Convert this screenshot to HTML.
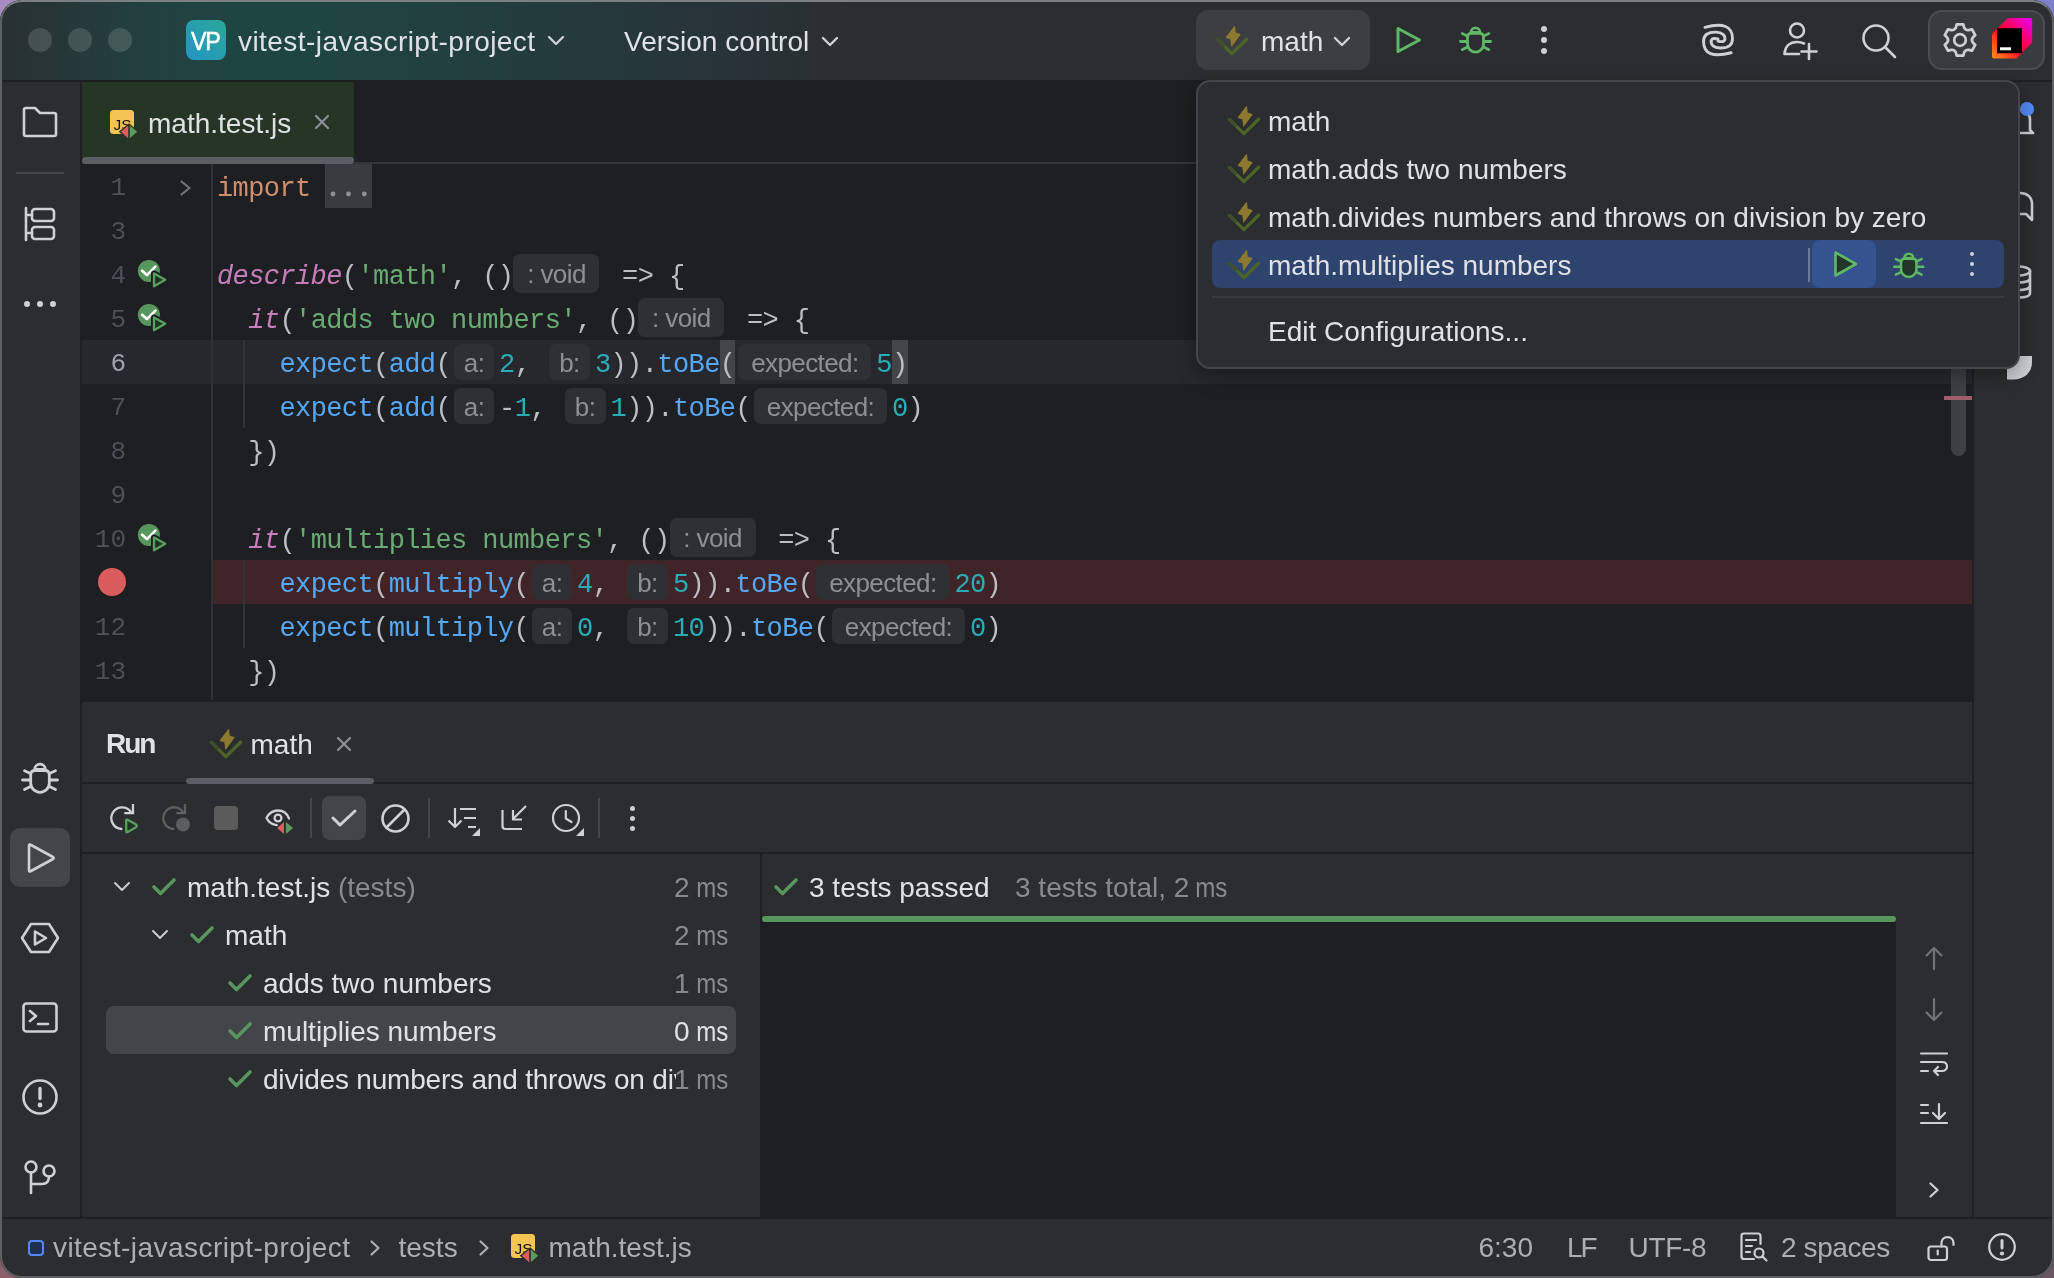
<!DOCTYPE html><html><head><meta charset="utf-8"><style>
*{box-sizing:border-box;margin:0;padding:0}
html,body{width:2054px;height:1278px;overflow:hidden}
body{position:relative;background:linear-gradient(90deg,#a68cc0,#7c80cc) top/100% 50% no-repeat,linear-gradient(90deg,#8c6068,#6a5563) bottom/100% 50% no-repeat;font-family:"Liberation Sans",sans-serif;color:#DFE1E5}
.a{position:absolute}
.win{position:absolute;left:0;top:0;width:2054px;height:1278px;border-radius:22px;overflow:hidden;background:#2B2D30;will-change:transform}
.frame{position:absolute;left:0;top:0;width:2054px;height:1278px;border-radius:22px;border:2px solid #5E6164;border-top-color:#7B7F82;pointer-events:none}
.ui{position:absolute;font-size:28px;white-space:nowrap;line-height:28px;color:#DFE1E5}
svg{position:absolute;overflow:visible}
.ic{fill:none;stroke:#CED0D6;stroke-width:2.6;stroke-linecap:round;stroke-linejoin:round}
.code{position:absolute;left:217px;height:44px;font-family:"Liberation Mono",monospace;font-size:27px;letter-spacing:-0.6px;line-height:44px;white-space:pre;color:#BCBEC4}
.ln{position:absolute;left:80px;width:46px;text-align:right;font-family:"Liberation Mono",monospace;font-size:26px;line-height:44px;color:#4B5059}
.kw{color:#CF8E6D}.fn{color:#56A8F5}.st{color:#6AAB73}.nu{color:#2AACB8}.tf{color:#C77DBB;font-style:italic}
.ih{display:inline-block;position:relative;top:-3px;vertical-align:top;height:36px;margin-top:4px;border-radius:7px;background:#2E3034;color:#8C8F96;font-family:"Liberation Sans",sans-serif;font-size:26px;line-height:33px;padding-top:2.5px;padding-bottom:0.5px;text-align:center;margin-left:3px;margin-right:3px}
.tv{height:39px;margin-top:2px;line-height:37px;padding-top:2px;padding-bottom:0}
</style></head><body><div class="win"><div class="a" style="left:0px;top:0px;width:2054px;height:80px;background:linear-gradient(90deg,#2A3032 0px,#233E3D 120px,#1F4543 230px,#1F4543 320px,#233D3C 520px,#27353A 680px,#2B2D30 880px);"></div><div class="a" style="left:0px;top:80px;width:2054px;height:2px;background:#1E1F22;"></div><div class="a" style="left:28px;top:28px;width:24px;height:24px;border-radius:12px;background:rgba(255,255,255,0.14)"></div><div class="a" style="left:68px;top:28px;width:24px;height:24px;border-radius:12px;background:rgba(255,255,255,0.14)"></div><div class="a" style="left:108px;top:28px;width:24px;height:24px;border-radius:12px;background:rgba(255,255,255,0.14)"></div><div class="a" style="left:186px;top:20px;width:40px;height:40px;background:linear-gradient(225deg,#2aa897 0%,#2494c6 100%);border-radius:8px"></div><div class="ui" style="left:191px;top:28.4px;font-size:26.5px;line-height:26.5px;color:#ffffff;letter-spacing:-1.5px;transform:scaleX(0.88);transform-origin:0 50%;-webkit-text-stroke:0.5px #fff">VP</div><div class="ui" style="left:238px;top:28.1px;font-size:28px;line-height:28px;color:#DFE1E5;letter-spacing:0.45px">vitest-javascript-project</div><svg style="left:548px;top:36px" width="16" height="9" viewBox="0 0 16 9"><path d="M1 1 L8.0 8 L15 1" fill="none" stroke="#CED0D6" stroke-width="2.4" stroke-linecap="round" stroke-linejoin="round"/></svg><div class="ui" style="left:624px;top:28.1px;font-size:28px;line-height:28px;color:#DFE1E5;">Version control</div><svg style="left:822px;top:37px" width="16" height="9" viewBox="0 0 16 9"><path d="M1 1 L8.0 8 L15 1" fill="none" stroke="#CED0D6" stroke-width="2.4" stroke-linecap="round" stroke-linejoin="round"/></svg><div class="a" style="left:1196px;top:10px;width:174px;height:60px;background:#3C3E42;border-radius:12px"></div><svg style="left:1216px;top:26px" width="34" height="32" viewBox="0 0 34 32"><g transform="scale(1.0)">
<path d="M1.4 13.4 L15.9 27.6 L30.6 13.2" fill="none" stroke="#4D6428" stroke-width="3.3" stroke-linecap="round" stroke-linejoin="round"/>
<path d="M1.4 13.4 L7.5 19.4" fill="none" stroke="#3F4F2A" stroke-width="3.3" stroke-linecap="round"/>
<path d="M18.6 0.4 L10 11.6 L14.8 12.9 L15.6 20.2 L24.2 8.5 L19.2 6.9 Z" fill="#8E7A2E" stroke="#8E7A2E" stroke-width="1" stroke-linejoin="round"/>
</g></svg><div class="ui" style="left:1261px;top:28.1px;font-size:28px;line-height:28px;color:#DFE1E5;">math</div><svg style="left:1334px;top:37px" width="16" height="9" viewBox="0 0 16 9"><path d="M1 1 L8.0 8 L15 1" fill="none" stroke="#CED0D6" stroke-width="2.4" stroke-linecap="round" stroke-linejoin="round"/></svg><svg style="left:1396px;top:26px" width="26" height="28" viewBox="0 0 26 28"><path d="M2 2.5 L23.5 14 L2 25.5 Z" fill="none" stroke="#5FB865" stroke-width="3" stroke-linejoin="round"/></svg><svg style="left:1454px;top:19.8px" width="50" height="45" viewBox="0 0 50 45"><g transform="scale(0.86)" fill="none" stroke="#5FB865" stroke-width="3.2" stroke-linecap="round" stroke-linejoin="round">
<path d="M19.7 14.5 A5.3 5.3 0 0 1 30.3 14.5 Z" fill="none"/>
<path d="M15.7 20 Q15.7 15.5 20 15.5 L30 15.5 Q34.3 15.5 34.3 20 L34.3 28 A9.3 9.3 0 0 1 15.7 28 Z" fill="none"/>
<path d="M7.5 25 L15.2 25 M34.8 25 L42.5 25 M9.5 15.8 L15.5 18.6 M40.5 15.8 L34.5 18.6 M9.5 34.5 L15.5 31.5 M40.5 34.5 L34.5 31.5"/></g></svg><div class="a" style="left:1541px;top:26px;width:6px;height:6px;border-radius:3px;background:#CED0D6"></div><div class="a" style="left:1541px;top:37px;width:6px;height:6px;border-radius:3px;background:#CED0D6"></div><div class="a" style="left:1541px;top:48px;width:6px;height:6px;border-radius:3px;background:#CED0D6"></div><svg style="left:1696px;top:18px" width="44" height="44" viewBox="0 0 44 44"><g class="ic" style="stroke-width:2.9"><path d="M8.95 9.29 Q36.49 2.07 36.49 20.65 Q36.49 30.29 24.10 29.95 Q14.46 29.26 15.15 22.72 Q16.18 19.28 22.03 21.0"/><path d="M35.11 34.77 Q7.57 42.0 7.57 23.41 Q7.57 13.77 19.97 14.11 Q29.60 14.80 28.92 21.34 Q27.88 24.78 22.03 23.06"/></g></svg><svg style="left:1783px;top:22px" width="36" height="38" viewBox="0 0 36 38"><g class="ic"><circle cx="14" cy="8.5" r="7"/><path d="M1.5 32 C2 24 7 20 14 20 C17 20 19 20.5 21 21.5 M1.5 32 L16 32 M26 22 L26 37 M18.5 29.5 L33.5 29.5"/></g></svg><svg style="left:1862px;top:24px" width="36" height="36" viewBox="0 0 36 36"><g class="ic"><circle cx="14" cy="14" r="12.5"/><path d="M23.5 23.5 L33 33"/></g></svg><div class="a" style="left:1928px;top:10px;width:117px;height:60px;background:#393B3F;border-radius:14px;border:2px solid #4A4C50"></div><svg style="left:1943px;top:22px" width="34" height="36" viewBox="0 0 34 36"><g class="ic" style="stroke:#CED0D6;stroke-width:2.7"><path d="M13.67 2.35 L20.33 2.35 Q21.30 10.55 28.89 7.29 L32.22 13.06 Q25.60 18.00 32.22 22.94 L28.89 28.71 Q21.30 25.45 20.33 33.65 L13.67 33.65 Q12.70 25.45 5.11 28.71 L1.78 22.94 Q8.40 18.00 1.78 13.06 L5.11 7.29 Q12.70 10.55 13.67 2.35 Z"/><circle cx="17" cy="18" r="5.8"/></g></svg><svg style="left:1992px;top:17.8px" width="41" height="41" viewBox="0 0 41 41"><defs><linearGradient id="jbg" x1="0" y1="41" x2="41" y2="0" gradientUnits="userSpaceOnUse"><stop offset="0" stop-color="#FF9419"/><stop offset="0.45" stop-color="#FF021D"/><stop offset="1" stop-color="#E600FF"/></linearGradient></defs>
<path d="M17 0 L38 0 Q40.2 0 40.2 2.2 L40.2 24.5 L24.5 40.4 L2.2 40.4 Q0 40.4 0 38.2 L0 17.5 Q0 16 1.2 14.8 L14.6 1.2 Q15.8 0 17 0 Z" fill="url(#jbg)"/>
<rect x="5" y="10.2" width="25" height="25" fill="#000"/><rect x="8" y="29.3" width="11" height="3" fill="#fff"/></svg><div class="a" style="left:80px;top:82px;width:2px;height:1136px;background:#1E1F22;"></div><svg style="left:22px;top:106px" width="36" height="32" viewBox="0 0 36 32"><path class="ic" d="M2 4 Q2 2 4 2 L13 2 L18 7 L32 7 Q34 7 34 9 L34 28 Q34 30 32 30 L4 30 Q2 30 2 28 Z"/></svg><div class="a" style="left:16px;top:172px;width:48px;height:2px;background:#43454A;"></div><svg style="left:24px;top:206px" width="32" height="36" viewBox="0 0 32 36"><g class="ic"><path d="M2 2 L2 34 M2 9 L8 9 M2 27 L8 27"/><rect x="8" y="3" width="22" height="12" rx="3"/><rect x="8" y="21" width="22" height="12" rx="3"/></g></svg><div class="a" style="left:24px;top:301px;width:6px;height:6px;border-radius:3px;background:#CED0D6"></div><div class="a" style="left:37px;top:301px;width:6px;height:6px;border-radius:3px;background:#CED0D6"></div><div class="a" style="left:50px;top:301px;width:6px;height:6px;border-radius:3px;background:#CED0D6"></div><svg style="left:15px;top:755px" width="50" height="45" viewBox="0 0 50 45"><g transform="scale(1.0)" fill="none" stroke="#CED0D6" stroke-width="2.8" stroke-linecap="round" stroke-linejoin="round">
<path d="M19.7 14.5 A5.3 5.3 0 0 1 30.3 14.5 Z" fill="none"/>
<path d="M15.7 20 Q15.7 15.5 20 15.5 L30 15.5 Q34.3 15.5 34.3 20 L34.3 28 A9.3 9.3 0 0 1 15.7 28 Z" fill="none"/>
<path d="M7.5 25 L15.2 25 M34.8 25 L42.5 25 M9.5 15.8 L15.5 18.6 M40.5 15.8 L34.5 18.6 M9.5 34.5 L15.5 31.5 M40.5 34.5 L34.5 31.5"/></g></svg><div class="a" style="left:10px;top:828px;width:60px;height:59px;background:#43454A;border-radius:10px"></div><svg style="left:26px;top:843px" width="30" height="30" viewBox="0 0 30 30"><path class="ic" d="M3 2.5 Q3 1 5 2 L27 14 Q28.5 15 27 16 L5 28 Q3 29 3 27.5 Z"/></svg><svg style="left:21px;top:922px" width="38" height="32" viewBox="0 0 38 32"><g class="ic"><path d="M10 2 L28 2 L37 16 L28 30 L10 30 L1 16 Z"/><path d="M14 9.5 L25 16 L14 22.5 Z"/></g></svg><svg style="left:22px;top:1002px" width="36" height="31" viewBox="0 0 36 31"><g class="ic"><rect x="1.5" y="1.5" width="33" height="28" rx="3"/><path d="M8 9 L14 14 L8 19 M16 22 L26 22"/></g></svg><svg style="left:22px;top:1079px" width="36" height="36" viewBox="0 0 36 36"><g class="ic"><circle cx="18" cy="18" r="16.5"/><path d="M18 9.5 L18 19.5" style="stroke-width:3.4"/></g><circle cx="18" cy="26" r="2.4" fill="#CED0D6"/></svg><svg style="left:24px;top:1160px" width="34" height="34" viewBox="0 0 34 34"><g class="ic"><circle cx="7" cy="7" r="5.5"/><circle cx="25" cy="11" r="5.5"/><path d="M7 12.5 L7 33 M25 16.5 Q25 24 18 24 L7 24"/></g></svg><div class="a" style="left:82px;top:82px;width:1890px;height:80px;background:#1E1F22;"></div><div class="a" style="left:82px;top:82px;width:272px;height:76px;background:#273527;"></div><div class="a" style="left:82px;top:156.5px;width:272px;height:7.5px;background:#5B5E65;border-radius:4px"></div><div class="a" style="left:354px;top:162px;width:1618px;height:2px;background:#34363A;"></div><svg style="left:110px;top:110px" width="30" height="30" viewBox="0 0 30 30"><rect x="0" y="0" width="24" height="24" rx="3.5" fill="#F4C553"/>
<text x="3.6" y="19.8" font-family="Liberation Sans" font-size="15.5" fill="#0E0F12">JS</text>
<path d="M19 13.2 L29.3 21.8 L19 30.4 L8.7 21.8 Z" fill="#273527"/>
<path d="M18.2 15.4 L10.8 21.8 L18.2 28.2 Z" fill="#E05B5F"/><path d="M19.8 15.4 L27.2 21.8 L19.8 28.2 Z" fill="#599C5E"/></svg><div class="ui" style="left:148px;top:110.1px;font-size:28px;line-height:28px;color:#DFE1E5;">math.test.js</div><svg style="left:315px;top:115px" width="14" height="14" viewBox="0 0 14 14"><path d="M1 1 L13 13 M13 1 L1 13" stroke="#8C8F96" stroke-width="2.2" stroke-linecap="round"/></svg><div class="a" style="left:82px;top:164px;width:1890px;height:536px;background:#1E1F22;"></div><div class="a" style="left:82px;top:340px;width:1890px;height:44px;background:#26282E;"></div><div class="a" style="left:211px;top:560px;width:1761px;height:44px;background:#3F2528;"></div><div class="a" style="left:211px;top:164px;width:2px;height:536px;background:#2F3135;"></div><div class="a" style="left:243px;top:340px;width:2px;height:88px;background:#313338;"></div><div class="a" style="left:243px;top:560px;width:2px;height:88px;background:#313338;"></div><div class="a" style="left:1951px;top:300px;width:15px;height:156px;background:#3E4044;border-radius:8px"></div><div class="a" style="left:1944px;top:396px;width:28px;height:4px;background:#A05E6A;"></div><div class="ln" style="top:166px;color:#4B5059">1</div><div class="ln" style="top:210px;color:#4B5059">3</div><div class="ln" style="top:254px;color:#4B5059">4</div><div class="ln" style="top:298px;color:#4B5059">5</div><div class="ln" style="top:342px;color:#A1A3AB">6</div><div class="ln" style="top:386px;color:#4B5059">7</div><div class="ln" style="top:430px;color:#4B5059">8</div><div class="ln" style="top:474px;color:#4B5059">9</div><div class="ln" style="top:518px;color:#4B5059">10</div><div class="ln" style="top:606px;color:#4B5059">12</div><div class="ln" style="top:650px;color:#4B5059">13</div><div class="a" style="left:98px;top:568px;width:28px;height:28px;border-radius:14px;background:#DB5C5C"></div><svg style="left:180px;top:180px" width="11" height="16" viewBox="0 0 11 16"><path d="M1.5 1.5 L9.5 8 L1.5 14.5" fill="none" stroke="#6F737A" stroke-width="2.2" stroke-linecap="round" stroke-linejoin="round"/></svg><svg style="left:130px;top:255px" width="40" height="40" viewBox="0 0 40 40"><circle cx="18.9" cy="15.9" r="11" fill="#57965C"/>
<path d="M12.1 15.8 L16.9 20.1 L25.4 11.6" fill="none" stroke="#fff" stroke-width="2.7" stroke-linecap="round" stroke-linejoin="round"/>
<path d="M24 18.4 L35.2 24.8 L24 31.2 Z" fill="#1E1F22" stroke="#1E1F22" stroke-width="6" stroke-linejoin="round"/>
<path d="M24 18.4 L35.2 24.8 L24 31.2 Z" fill="#1F3322" stroke="#5AA05E" stroke-width="2.3" stroke-linejoin="round"/></svg><svg style="left:130px;top:299px" width="40" height="40" viewBox="0 0 40 40"><circle cx="18.9" cy="15.9" r="11" fill="#57965C"/>
<path d="M12.1 15.8 L16.9 20.1 L25.4 11.6" fill="none" stroke="#fff" stroke-width="2.7" stroke-linecap="round" stroke-linejoin="round"/>
<path d="M24 18.4 L35.2 24.8 L24 31.2 Z" fill="#1E1F22" stroke="#1E1F22" stroke-width="6" stroke-linejoin="round"/>
<path d="M24 18.4 L35.2 24.8 L24 31.2 Z" fill="#1F3322" stroke="#5AA05E" stroke-width="2.3" stroke-linejoin="round"/></svg><svg style="left:130px;top:519px" width="40" height="40" viewBox="0 0 40 40"><circle cx="18.9" cy="15.9" r="11" fill="#57965C"/>
<path d="M12.1 15.8 L16.9 20.1 L25.4 11.6" fill="none" stroke="#fff" stroke-width="2.7" stroke-linecap="round" stroke-linejoin="round"/>
<path d="M24 18.4 L35.2 24.8 L24 31.2 Z" fill="#1E1F22" stroke="#1E1F22" stroke-width="6" stroke-linejoin="round"/>
<path d="M24 18.4 L35.2 24.8 L24 31.2 Z" fill="#1F3322" stroke="#5AA05E" stroke-width="2.3" stroke-linejoin="round"/></svg><div class="code" style="top:164px"><span style="position:relative;top:3px"><span class="kw">import</span> </span></div><div class="code" style="top:252px"><span style="position:relative;top:3px"><span class="tf">describe</span>(<span class="st">'math'</span>, ()<span class="ih tv" style="width:86px;margin-left:0px;margin-right:7px">: void</span> => {</span></div><div class="code" style="top:296px"><span style="position:relative;top:3px">  <span class="tf">it</span>(<span class="st">'adds two numbers'</span>, ()<span class="ih tv" style="width:86px;margin-left:0px;margin-right:7px">: void</span> => {</span></div><div class="code" style="top:340px"><span style="position:relative;top:3px">    <span class="fn">expect</span>(<span class="fn">add</span>(<span class="ih" style="width:40px;margin-left:3px;margin-right:5px">a:</span><span class="nu">2</span>, <span class="ih" style="width:41px;margin-left:3px;margin-right:5px">b:</span><span class="nu">3</span>)).<span class="fn">toBe</span><span style="background:#43454A;display:inline-block;vertical-align:top;height:44px;position:relative;top:-3px;padding-top:3px;line-height:44px">(</span><span class="ih" style="width:133px;margin-left:3px;margin-right:5px">expected:</span><span class="nu">5</span><span style="background:#43454A;display:inline-block;vertical-align:top;height:44px;position:relative;top:-3px;padding-top:3px;line-height:44px">)</span></span></div><div class="code" style="top:384px"><span style="position:relative;top:3px">    <span class="fn">expect</span>(<span class="fn">add</span>(<span class="ih" style="width:40px;margin-left:3px;margin-right:5px">a:</span>-<span class="nu">1</span>, <span class="ih" style="width:41px;margin-left:3px;margin-right:5px">b:</span><span class="nu">1</span>)).<span class="fn">toBe</span>(<span class="ih" style="width:133px;margin-left:3px;margin-right:5px">expected:</span><span class="nu">0</span>)</span></div><div class="code" style="top:428px"><span style="position:relative;top:3px">  })</span></div><div class="code" style="top:516px"><span style="position:relative;top:3px">  <span class="tf">it</span>(<span class="st">'multiplies numbers'</span>, ()<span class="ih tv" style="width:86px;margin-left:0px;margin-right:7px">: void</span> => {</span></div><div class="code" style="top:560px"><span style="position:relative;top:3px">    <span class="fn">expect</span>(<span class="fn">multiply</span>(<span class="ih" style="width:40px;margin-left:3px;margin-right:5px">a:</span><span class="nu">4</span>, <span class="ih" style="width:41px;margin-left:3px;margin-right:5px">b:</span><span class="nu">5</span>)).<span class="fn">toBe</span>(<span class="ih" style="width:133px;margin-left:3px;margin-right:5px">expected:</span><span class="nu">20</span>)</span></div><div class="code" style="top:604px"><span style="position:relative;top:3px">    <span class="fn">expect</span>(<span class="fn">multiply</span>(<span class="ih" style="width:40px;margin-left:3px;margin-right:5px">a:</span><span class="nu">0</span>, <span class="ih" style="width:41px;margin-left:3px;margin-right:5px">b:</span><span class="nu">10</span>)).<span class="fn">toBe</span>(<span class="ih" style="width:133px;margin-left:3px;margin-right:5px">expected:</span><span class="nu">0</span>)</span></div><div class="code" style="top:648px"><span style="position:relative;top:3px">  })</span></div><div class="a" style="left:325px;top:164px;width:47px;height:44px;background:#393B40;"></div><svg style="left:325px;top:164px" width="47" height="44" viewBox="0 0 47 44"><g fill="#8F9298"><circle cx="8" cy="30" r="2.4"/><circle cx="23.5" cy="30" r="2.4"/><circle cx="39.3" cy="30" r="2.4"/></g></svg><div class="a" style="left:82px;top:700px;width:1890px;height:2px;background:#1E1F22;"></div><div class="ui" style="left:106px;top:729.6px;font-size:28px;line-height:28px;color:#DFE1E5;font-weight:bold;letter-spacing:-2px">Run</div><svg style="left:210px;top:729px" width="34" height="32" viewBox="0 0 34 32"><g transform="scale(1.0)">
<path d="M1.4 13.4 L15.9 27.6 L30.6 13.2" fill="none" stroke="#4D6428" stroke-width="3.3" stroke-linecap="round" stroke-linejoin="round"/>
<path d="M1.4 13.4 L7.5 19.4" fill="none" stroke="#3F4F2A" stroke-width="3.3" stroke-linecap="round"/>
<path d="M18.6 0.4 L10 11.6 L14.8 12.9 L15.6 20.2 L24.2 8.5 L19.2 6.9 Z" fill="#8E7A2E" stroke="#8E7A2E" stroke-width="1" stroke-linejoin="round"/>
</g></svg><div class="ui" style="left:250.5px;top:730.7px;font-size:28px;line-height:28px;color:#DFE1E5;">math</div><svg style="left:337px;top:737px" width="14" height="14" viewBox="0 0 14 14"><path d="M1 1 L13 13 M13 1 L1 13" stroke="#8C8F96" stroke-width="2.2" stroke-linecap="round"/></svg><div class="a" style="left:82px;top:782px;width:1890px;height:2px;background:#1E1F22;"></div><div class="a" style="left:186px;top:778px;width:188px;height:6px;background:#5B5E65;border-radius:3px"></div><svg style="left:104px;top:798px" width="40" height="40" viewBox="0 0 40 40"><g class="ic" style="stroke-width:2.3"><path d="M17.4 31 A10.8 10.8 0 1 1 26.8 13.8"/><path d="M29 6 L29 15.2 L20.3 15.2" style="stroke-linecap:butt;stroke-linejoin:miter"/></g>
<path d="M22.2 22.6 Q22.2 21 23.6 21.8 L32 26.6 Q33.4 27.9 32 29.2 L23.6 34 Q22.2 34.8 22.2 33.2 Z" fill="#1F3322" stroke="#5AA05E" stroke-width="2.3" stroke-linejoin="round"/></svg><svg style="left:156px;top:798px" width="40" height="40" viewBox="0 0 40 40"><g class="ic" style="stroke:#5E5F61;stroke-width:2.3"><path d="M17.4 31 A10.8 10.8 0 1 1 26.8 13.8"/><path d="M29 6 L29 15.2 L20.3 15.2" style="stroke-linecap:butt;stroke-linejoin:miter"/></g>
<circle cx="27" cy="26.5" r="7" fill="#5C5D5F"/></svg><div class="a" style="left:214px;top:806px;width:24px;height:24px;background:#5B5B5C;border-radius:4px"></div><svg style="left:258px;top:798px" width="40" height="40" viewBox="0 0 40 40"><g class="ic" style="stroke-width:2.3"><path d="M18.8 27.2 C13 26.5 10 23 8.5 20 C11 15 15 12.5 20 12.5 C25 12.5 29 15 31 20.5"/><circle cx="20" cy="20" r="3.4"/></g>
<path d="M19.1 30 L26 24.1 L26 36 Z" fill="#E05B5F"/><path d="M27.9 24.1 L35 30 L27.9 36 Z" fill="#599C5E"/></svg><div class="a" style="left:310px;top:798px;width:2px;height:40px;background:#43454A;"></div><div class="a" style="left:322px;top:796px;width:44px;height:44px;background:#43454A;border-radius:8px"></div><svg style="left:331px;top:809px" width="26" height="18" viewBox="0 0 26 18"><path class="ic" style="stroke-width:3" d="M2 9 L9 16 L24 2"/></svg><svg style="left:381px;top:804px" width="30" height="30" viewBox="0 0 30 30"><g class="ic"><circle cx="14.5" cy="14.5" r="13"/><path d="M5.5 23.5 L23.5 5.5"/></g></svg><div class="a" style="left:428px;top:798px;width:2px;height:40px;background:#43454A;"></div><svg style="left:440px;top:795px" width="160" height="50" viewBox="0 0 160 50"><g class="ic" style="stroke-width:2.2;stroke-linecap:butt"><path d="M15 13 L15 32 M8.5 25.5 L15 32 L21.5 25.5 M20 14 L36 14 M24 23 L36 23 M28 32 L36 32"/>
<path d="M62.5 15 L62.5 31 Q62.5 34 65.5 34 L82 34 M86 11 L73 24 M73 15 L73 24.5 L82 24.5"/>
<circle cx="126" cy="23" r="13"/><path d="M125.8 16 L125.8 23.5 L131.5 27" style="stroke-linecap:round"/></g>
<path d="M40 33 L40 41 L32 41 Z M144 33 L144 41 L136 41 Z" fill="#CED0D6"/></svg><div class="a" style="left:598px;top:798px;width:2px;height:40px;background:#43454A;"></div><div class="a" style="left:629.5px;top:805.5px;width:5px;height:5px;border-radius:3px;background:#CED0D6"></div><div class="a" style="left:629.5px;top:815.5px;width:5px;height:5px;border-radius:3px;background:#CED0D6"></div><div class="a" style="left:629.5px;top:825.5px;width:5px;height:5px;border-radius:3px;background:#CED0D6"></div><div class="a" style="left:82px;top:852px;width:1890px;height:2px;background:#1E1F22;"></div><div class="a" style="left:760px;top:854px;width:2px;height:364px;background:#1E1F22;"></div><svg style="left:114px;top:882px" width="16" height="9" viewBox="0 0 16 9"><path d="M1 1 L8.0 8 L15 1" fill="none" stroke="#C9CBD0" stroke-width="2.0" stroke-linecap="round" stroke-linejoin="round"/></svg><svg style="left:152px;top:878px" width="24" height="18" viewBox="0 0 24 18"><path d="M2 9 L8.5 15.5 L22 2" fill="none" stroke="#57965C" stroke-width="3.6" stroke-linecap="round" stroke-linejoin="round"/></svg><div class="ui" style="left:187px;top:874.1px;font-size:28px;line-height:28px;color:#DFE1E5;">math.test.js <span style="color:#868A91">(tests)</span></div><svg style="left:152px;top:930px" width="16" height="9" viewBox="0 0 16 9"><path d="M1 1 L8.0 8 L15 1" fill="none" stroke="#C9CBD0" stroke-width="2.0" stroke-linecap="round" stroke-linejoin="round"/></svg><svg style="left:190px;top:926px" width="24" height="18" viewBox="0 0 24 18"><path d="M2 9 L8.5 15.5 L22 2" fill="none" stroke="#57965C" stroke-width="3.6" stroke-linecap="round" stroke-linejoin="round"/></svg><div class="ui" style="left:225px;top:922.1px;font-size:28px;line-height:28px;color:#DFE1E5;">math</div><svg style="left:228px;top:974px" width="24" height="18" viewBox="0 0 24 18"><path d="M2 9 L8.5 15.5 L22 2" fill="none" stroke="#57965C" stroke-width="3.6" stroke-linecap="round" stroke-linejoin="round"/></svg><div class="ui" style="left:263px;top:970.1px;font-size:28px;line-height:28px;color:#DFE1E5;">adds two numbers</div><div class="a" style="left:106px;top:1006px;width:630px;height:48px;background:#43454A;border-radius:8px"></div><svg style="left:228px;top:1022px" width="24" height="18" viewBox="0 0 24 18"><path d="M2 9 L8.5 15.5 L22 2" fill="none" stroke="#57965C" stroke-width="3.6" stroke-linecap="round" stroke-linejoin="round"/></svg><div class="ui" style="left:263px;top:1018.1px;font-size:28px;line-height:28px;color:#DFE1E5;">multiplies numbers</div><svg style="left:228px;top:1070px" width="24" height="18" viewBox="0 0 24 18"><path d="M2 9 L8.5 15.5 L22 2" fill="none" stroke="#57965C" stroke-width="3.6" stroke-linecap="round" stroke-linejoin="round"/></svg><div class="a" style="left:263px;top:1060px;width:413px;height:40px;overflow:hidden"><div class="ui" style="left:0px;top:6.1px;font-size:28px;line-height:28px;color:#DFE1E5;letter-spacing:-0.2px">divides numbers and throws on division by zero</div></div><div class="ui" style="right:1326px;top:874.1px;color:#868A91">2<span style="display:inline-block;margin-left:1px;transform:scaleX(0.86);transform-origin:100% 50%">ms</span></div><div class="ui" style="right:1326px;top:922.1px;color:#868A91">2<span style="display:inline-block;margin-left:1px;transform:scaleX(0.86);transform-origin:100% 50%">ms</span></div><div class="ui" style="right:1326px;top:970.1px;color:#868A91">1<span style="display:inline-block;margin-left:1px;transform:scaleX(0.86);transform-origin:100% 50%">ms</span></div><div class="ui" style="right:1326px;top:1018.1px;color:#DFE1E5">0<span style="display:inline-block;margin-left:1px;transform:scaleX(0.86);transform-origin:100% 50%">ms</span></div><div class="ui" style="right:1326px;top:1066.1px;color:#868A91">1<span style="display:inline-block;margin-left:1px;transform:scaleX(0.86);transform-origin:100% 50%">ms</span></div><svg style="left:774px;top:878px" width="24" height="18" viewBox="0 0 24 18"><path d="M2 9 L8.5 15.5 L22 2" fill="none" stroke="#57965C" stroke-width="3.6" stroke-linecap="round" stroke-linejoin="round"/></svg><div class="ui" style="left:809px;top:874.1px;font-size:28px;line-height:28px;color:#DFE1E5;">3 tests passed</div><div class="ui" style="left:1015px;top:874.1px;font-size:28px;line-height:28px;color:#868A91;">3 tests total, 2<span style="display:inline-block;margin-left:1px;transform:scaleX(0.86);transform-origin:100% 50%">ms</span></div><div class="a" style="left:762px;top:922px;width:1134px;height:296px;background:#1E1F22;"></div><div class="a" style="left:762px;top:916px;width:1134px;height:6px;background:#57965C;border-radius:3px"></div><svg style="left:1925px;top:946px" width="18" height="24" viewBox="0 0 18 24"><path d="M9 23 L9 2 M1.5 9.5 L9 2 L16.5 9.5" fill="none" stroke="#6F737A" stroke-width="2.2" stroke-linecap="round" stroke-linejoin="round"/></svg><svg style="left:1925px;top:998px" width="18" height="24" viewBox="0 0 18 24"><path d="M9 1 L9 22 M1.5 14.5 L9 22 L16.5 14.5" fill="none" stroke="#6F737A" stroke-width="2.2" stroke-linecap="round" stroke-linejoin="round"/></svg><svg style="left:1920px;top:1052px" width="30" height="24" viewBox="0 0 30 24"><g class="ic" style="stroke-width:2.2"><path d="M1 1.5 L27 1.5 M1 19 L8 19 M1 10 L22 10 C26 10 27 12 27 14.5 C27 17 25 19 22 19 L14 19 M18 15 L14 19 L18 23"/></g></svg><svg style="left:1920px;top:1103px" width="30" height="22" viewBox="0 0 30 22"><g class="ic" style="stroke-width:2.2"><path d="M1 2 L8 2 M1 10 L8 10 M1 20 L27 20 M19 1 L19 15 M13 10 L19 16 L25 10"/></g></svg><svg style="left:1929px;top:1182px" width="10" height="16" viewBox="0 0 10 16"><path d="M1.5 1.5 L8.5 8 L1.5 14.5" fill="none" stroke="#CED0D6" stroke-width="2.2" stroke-linecap="round" stroke-linejoin="round"/></svg><div class="a" style="left:1972px;top:82px;width:2px;height:1136px;background:#1E1F22;"></div><svg style="left:2004px;top:106px" width="32" height="32" viewBox="0 0 32 32"><g class="ic"><path d="M6 24 L6 14 C6 8 10 4 16 4 C22 4 26 8 26 14 L26 24 L29 27 L3 27 Z"/></g></svg><div class="a" style="left:2020px;top:102px;width:14px;height:14px;border-radius:7px;background:#548AF7"></div><svg style="left:2004px;top:190px" width="32" height="32" viewBox="0 0 32 32"><g class="ic"><path d="M4 14 C4 7 9 3 16 3 C23 3 28 7 28 14 L28 30 L22 24 L10 24 C6 24 4 21 4 18 Z"/></g></svg><svg style="left:2003px;top:265px" width="30" height="34" viewBox="0 0 30 34"><g class="ic"><ellipse cx="15" cy="6" rx="12" ry="4.5"/><path d="M3 6 L3 28 C3 31 8 32.5 15 32.5 C22 32.5 27 31 27 28 L27 6 M3 13.5 C3 16 8 17.5 15 17.5 C22 17.5 27 16 27 13.5 M3 21 C3 23.5 8 25 15 25 C22 25 27 23.5 27 21"/></g></svg><svg style="left:2007px;top:355.5px" width="26" height="24" viewBox="0 0 26 24"><path d="M0 0 L25 0 L25 6 C25 17 17 23.5 6 23.5 L0 23.5 Z" fill="#CED0D6"/></svg><div class="a" style="left:0px;top:1217px;width:2054px;height:2px;background:#1E1F22;"></div><div class="a" style="left:28px;top:1240px;width:16px;height:16px;background:#20304F;border-radius:4px;border:2.5px solid #548AF7"></div><div class="ui" style="left:53px;top:1234.1px;font-size:28px;line-height:28px;color:#ABAEB4;letter-spacing:0.45px">vitest-javascript-project</div><svg style="left:370px;top:1240px" width="10" height="16" viewBox="0 0 10 16"><path d="M1.5 1.5 L8.5 8 L1.5 14.5" fill="none" stroke="#ABAEB4" stroke-width="2.2" stroke-linecap="round" stroke-linejoin="round"/></svg><div class="ui" style="left:398.5px;top:1234.1px;font-size:28px;line-height:28px;color:#ABAEB4;">tests</div><svg style="left:479px;top:1240px" width="10" height="16" viewBox="0 0 10 16"><path d="M1.5 1.5 L8.5 8 L1.5 14.5" fill="none" stroke="#ABAEB4" stroke-width="2.2" stroke-linecap="round" stroke-linejoin="round"/></svg><svg style="left:511px;top:1234px" width="30" height="30" viewBox="0 0 30 30"><rect x="0" y="0" width="24" height="24" rx="3.5" fill="#F4C553"/>
<text x="3.6" y="19.8" font-family="Liberation Sans" font-size="15.5" fill="#0E0F12">JS</text>
<path d="M19 13.2 L29.3 21.8 L19 30.4 L8.7 21.8 Z" fill="#2B2D30"/>
<path d="M18.2 15.4 L10.8 21.8 L18.2 28.2 Z" fill="#E05B5F"/><path d="M19.8 15.4 L27.2 21.8 L19.8 28.2 Z" fill="#599C5E"/></svg><div class="ui" style="left:548.5px;top:1234.1px;font-size:28px;line-height:28px;color:#ABAEB4;">math.test.js</div><div class="ui" style="left:1478.5px;top:1234.1px;font-size:28px;line-height:28px;color:#ABAEB4;">6:30</div><div class="ui" style="left:1567px;top:1234.1px;font-size:28px;line-height:28px;color:#ABAEB4;letter-spacing:-2px">LF</div><div class="ui" style="left:1628.5px;top:1234.1px;font-size:28px;line-height:28px;color:#ABAEB4;letter-spacing:-0.3px">UTF-8</div><svg style="left:1740px;top:1232px" width="28" height="30" viewBox="0 0 28 30"><g class="ic" style="stroke:#CED0D6;stroke-width:2.2"><path d="M14 27 L4 27 Q1.5 27 1.5 24.5 L1.5 3.5 Q1.5 1.5 4 1.5 L18 1.5 Q20.5 1.5 20.5 4 L20.5 12 M6 8 L16 8 M6 14 L12 14 M6 20 L10 20"/><circle cx="19" cy="21" r="4.5"/><path d="M22.5 24.5 L26.5 28.5"/></g></svg><div class="ui" style="left:1781px;top:1234.1px;font-size:28px;line-height:28px;color:#ABAEB4;letter-spacing:-0.4px">2 spaces</div><svg style="left:1927px;top:1236px" width="28" height="26" viewBox="0 0 28 26"><g class="ic" style="stroke:#CED0D6;stroke-width:2.2"><rect x="1.5" y="10.5" width="18.5" height="13.5" rx="2.5"/><path d="M14.5 10.5 L14.5 7 C14.5 3.5 17 1.2 20.5 1.2 C24 1.2 26.5 3.5 26.5 7 L26.5 9 M10.7 14.5 L10.7 18.5"/></g></svg><svg style="left:1988px;top:1233px" width="28" height="28" viewBox="0 0 28 28"><g class="ic" style="stroke:#CED0D6;stroke-width:2.2"><circle cx="14" cy="14" r="12.8"/><path d="M14 7.5 L14 15" style="stroke-width:3"/></g><circle cx="14" cy="20.5" r="2.1" fill="#CED0D6"/></svg><div class="a" style="left:1196px;top:80px;width:824px;height:289px;background:#2B2D30;border-radius:14px;border:2px solid #43454A;box-shadow:0 6px 20px rgba(0,0,0,0.35)"></div><svg style="left:1228px;top:106px" width="34" height="32" viewBox="0 0 34 32"><g transform="scale(1.0)">
<path d="M1.4 13.4 L15.9 27.6 L30.6 13.2" fill="none" stroke="#4D6428" stroke-width="3.3" stroke-linecap="round" stroke-linejoin="round"/>
<path d="M1.4 13.4 L7.5 19.4" fill="none" stroke="#3F4F2A" stroke-width="3.3" stroke-linecap="round"/>
<path d="M18.6 0.4 L10 11.6 L14.8 12.9 L15.6 20.2 L24.2 8.5 L19.2 6.9 Z" fill="#8E7A2E" stroke="#8E7A2E" stroke-width="1" stroke-linejoin="round"/>
</g></svg><div class="ui" style="left:1268px;top:108.1px;font-size:28px;line-height:28px;color:#DFE1E5;">math</div><svg style="left:1228px;top:154px" width="34" height="32" viewBox="0 0 34 32"><g transform="scale(1.0)">
<path d="M1.4 13.4 L15.9 27.6 L30.6 13.2" fill="none" stroke="#4D6428" stroke-width="3.3" stroke-linecap="round" stroke-linejoin="round"/>
<path d="M1.4 13.4 L7.5 19.4" fill="none" stroke="#3F4F2A" stroke-width="3.3" stroke-linecap="round"/>
<path d="M18.6 0.4 L10 11.6 L14.8 12.9 L15.6 20.2 L24.2 8.5 L19.2 6.9 Z" fill="#8E7A2E" stroke="#8E7A2E" stroke-width="1" stroke-linejoin="round"/>
</g></svg><div class="ui" style="left:1268px;top:156.1px;font-size:28px;line-height:28px;color:#DFE1E5;">math.adds two numbers</div><svg style="left:1228px;top:202px" width="34" height="32" viewBox="0 0 34 32"><g transform="scale(1.0)">
<path d="M1.4 13.4 L15.9 27.6 L30.6 13.2" fill="none" stroke="#4D6428" stroke-width="3.3" stroke-linecap="round" stroke-linejoin="round"/>
<path d="M1.4 13.4 L7.5 19.4" fill="none" stroke="#3F4F2A" stroke-width="3.3" stroke-linecap="round"/>
<path d="M18.6 0.4 L10 11.6 L14.8 12.9 L15.6 20.2 L24.2 8.5 L19.2 6.9 Z" fill="#8E7A2E" stroke="#8E7A2E" stroke-width="1" stroke-linejoin="round"/>
</g></svg><div class="ui" style="left:1268px;top:204.1px;font-size:28px;line-height:28px;color:#DFE1E5;">math.divides numbers and throws on division by zero</div><div class="a" style="left:1212px;top:240px;width:792px;height:48px;background:#2E436E;border-radius:8px"></div><svg style="left:1228px;top:250px" width="34" height="32" viewBox="0 0 34 32"><g transform="scale(1.0)">
<path d="M1.4 13.4 L15.9 27.6 L30.6 13.2" fill="none" stroke="#4D6428" stroke-width="3.3" stroke-linecap="round" stroke-linejoin="round"/>
<path d="M1.4 13.4 L7.5 19.4" fill="none" stroke="#3F4F2A" stroke-width="3.3" stroke-linecap="round"/>
<path d="M18.6 0.4 L10 11.6 L14.8 12.9 L15.6 20.2 L24.2 8.5 L19.2 6.9 Z" fill="#8E7A2E" stroke="#8E7A2E" stroke-width="1" stroke-linejoin="round"/>
</g></svg><div class="ui" style="left:1268px;top:252.1px;font-size:28px;line-height:28px;color:#DFE1E5;">math.multiplies numbers</div><div class="a" style="left:1808px;top:248px;width:2px;height:34px;background:#6C7A99;"></div><div class="a" style="left:1812px;top:240px;width:64px;height:48px;background:#35538F;border-radius:8px"></div><svg style="left:1833px;top:250px" width="26" height="28" viewBox="0 0 26 28"><path d="M2.5 2.5 L23 14 L2.5 25.5 Z" fill="#22362A" stroke="#5FB865" stroke-width="2.6" stroke-linejoin="round"/></svg><svg style="left:1887.5px;top:246px" width="50" height="45" viewBox="0 0 50 45"><g transform="scale(0.83)" fill="none" stroke="#5FB865" stroke-width="3" stroke-linecap="round" stroke-linejoin="round">
<path d="M19.7 14.5 A5.3 5.3 0 0 1 30.3 14.5 Z" fill="#22362A"/>
<path d="M15.7 20 Q15.7 15.5 20 15.5 L30 15.5 Q34.3 15.5 34.3 20 L34.3 28 A9.3 9.3 0 0 1 15.7 28 Z" fill="#22362A"/>
<path d="M7.5 25 L15.2 25 M34.8 25 L42.5 25 M9.5 15.8 L15.5 18.6 M40.5 15.8 L34.5 18.6 M9.5 34.5 L15.5 31.5 M40.5 34.5 L34.5 31.5"/></g></svg><div class="a" style="left:1969.7px;top:251.7px;width:4.6px;height:4.6px;border-radius:3px;background:#CED0D6"></div><div class="a" style="left:1969.7px;top:261.7px;width:4.6px;height:4.6px;border-radius:3px;background:#CED0D6"></div><div class="a" style="left:1969.7px;top:271.7px;width:4.6px;height:4.6px;border-radius:3px;background:#CED0D6"></div><div class="a" style="left:1212px;top:296px;width:792px;height:2px;background:#393B40;"></div><div class="ui" style="left:1268px;top:318.1px;font-size:28px;line-height:28px;color:#DFE1E5;">Edit Configurations...</div></div><div class="frame"></div></body></html>
